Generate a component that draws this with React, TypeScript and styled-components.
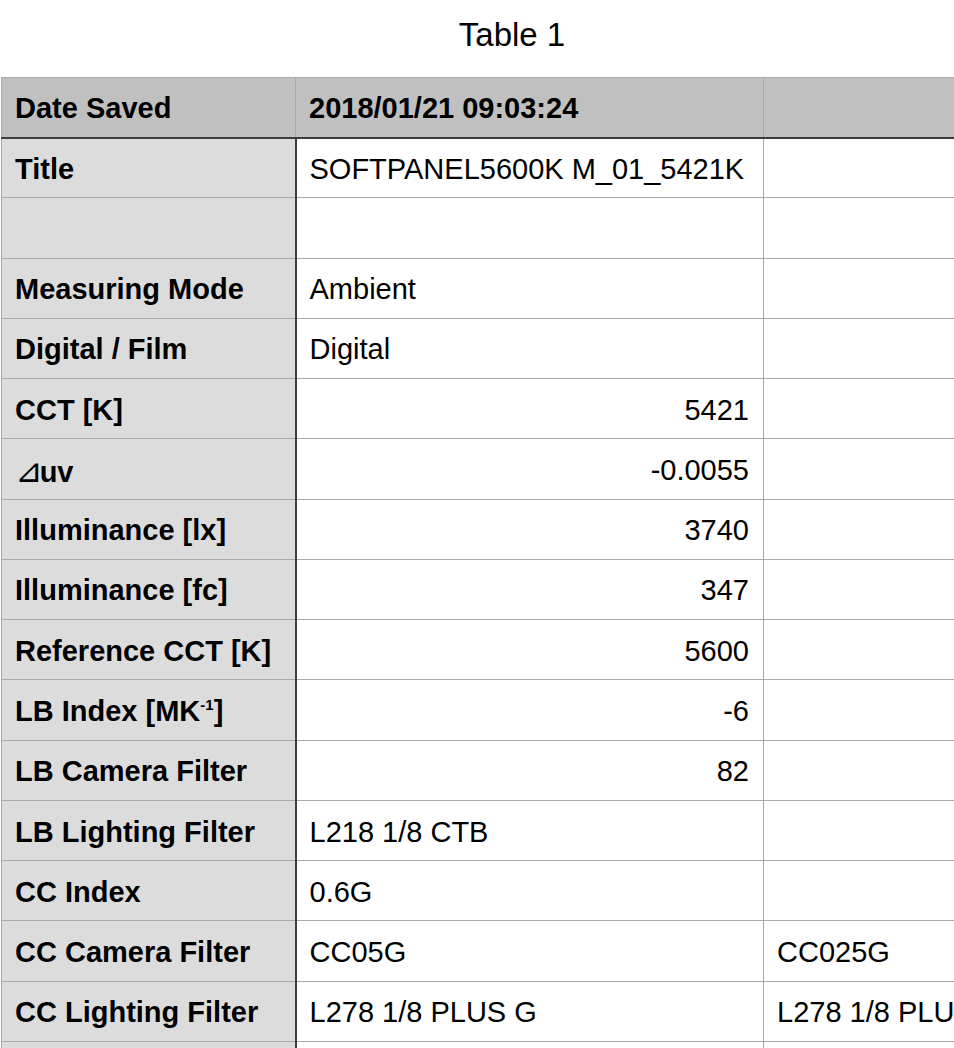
import React from "react";
import styled, { createGlobalStyle } from "styled-components";

const GlobalStyle = createGlobalStyle`
  html, body {
    margin: 0;
    padding: 0;
    background: #ffffff;
    overflow: hidden;
  }
  body {
    font-family: "Liberation Sans", Arial, sans-serif;
    color: #000000;
  }
`;

const Page = styled.div`
  width: 1022px;
  padding-left: 1px;
`;

const Caption = styled.div`
  height: 77px;
  box-sizing: border-box;
  padding-top: 16px;
  text-align: center;
  font-size: 33px;
  line-height: 38px;
`;

const Sheet = styled.table`
  border-collapse: collapse;
  table-layout: fixed;
  width: 1021px;
  font-size: 29px;
`;

const HeaderRow = styled.tr`
  height: 60px;
  background: #bfc0bf;
  font-weight: bold;

  & > td {
    border-bottom: 2px solid #3d3d3d;
  }
`;

const Row = styled.tr`
  height: 60.27px;
`;

const Cell = styled.td<{ $align?: "left" | "right" }>`
  border: 1px solid #a9a9a9;
  padding: 3px 14px 0 13px;
  text-align: ${(p) => p.$align ?? "left"};
  white-space: nowrap;
  overflow: hidden;
  vertical-align: middle;
`;

const LabelCell = styled(Cell)`
  background: #dcdcdc;
  font-weight: bold;
  border-right: 2px solid #3d3d3d;
`;

const Delta = styled.span`
  font-family: "DejaVu Sans", sans-serif;
  font-weight: normal;
  font-size: 33px;
  letter-spacing: -3px;
`;

const Sup = styled.span`
  font-size: 15px;
  position: relative;
  top: -11px;
`;

type Line = {
  label: React.ReactNode;
  value: string;
  extra?: string;
  right?: boolean;
};

const lines: Line[] = [
  { label: "Title", value: "SOFTPANEL5600K M_01_5421K" },
  { label: "", value: "" },
  { label: "Measuring Mode", value: "Ambient" },
  { label: "Digital / Film", value: "Digital" },
  { label: "CCT [K]", value: "5421", right: true },
  {
    label: (
      <>
        <Delta>⊿</Delta>uv
      </>
    ),
    value: "-0.0055",
    right: true,
  },
  { label: "Illuminance [lx]", value: "3740", right: true },
  { label: "Illuminance [fc]", value: "347", right: true },
  { label: "Reference CCT [K]", value: "5600", right: true },
  {
    label: (
      <>
        LB Index [MK<Sup>-1</Sup>]
      </>
    ),
    value: "-6",
    right: true,
  },
  { label: "LB Camera Filter", value: "82", right: true },
  { label: "LB Lighting Filter", value: "L218 1/8 CTB" },
  { label: "CC Index", value: "0.6G" },
  { label: "CC Camera Filter", value: "CC05G", extra: "CC025G" },
  {
    label: "CC Lighting Filter",
    value: "L278 1/8 PLUS G",
    extra: "L278 1/8 PLUS G",
  },
  { label: "", value: "" },
];

export default function App() {
  return (
    <Page>
      <GlobalStyle />
      <Caption>Table 1</Caption>
      <Sheet>
        <colgroup>
          <col style={{ width: 294 }} />
          <col style={{ width: 468 }} />
          <col style={{ width: 259 }} />
        </colgroup>
        <tbody>
          <HeaderRow>
            <Cell>Date Saved</Cell>
            <Cell>2018/01/21 09:03:24</Cell>
            <Cell />
          </HeaderRow>
          {lines.map((line, i) => (
            <Row key={i}>
              <LabelCell>{line.label}</LabelCell>
              <Cell $align={line.right ? "right" : "left"}>{line.value}</Cell>
              <Cell>{line.extra ?? ""}</Cell>
            </Row>
          ))}
        </tbody>
      </Sheet>
    </Page>
  );
}
